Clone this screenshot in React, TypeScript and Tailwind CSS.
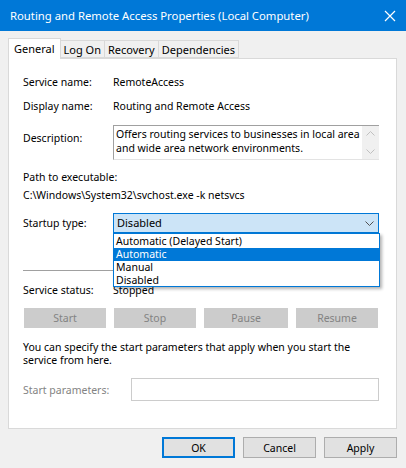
import React from 'react';

const FONT = "font-['Segoe_UI','Noto_Sans',sans-serif]";

function Tab({ label, active }: { label: string; active?: boolean }) {
  return active ? (
    <div className="h-[21px] -mb-px px-[5px] pt-[2px] bg-white border border-b-0 border-[#d9d9d9] relative z-10 text-[11px]">
      {label}
    </div>
  ) : (
    <div className="h-[18px] mt-[2px] px-[3px] pt-px bg-[#f0f0f0] border border-l-0 border-[#d9d9d9] text-[11px]">
      {label}
    </div>
  );
}

function Row({ label, value }: { label: string; value: string }) {
  return (
    <div className="flex h-4 items-center">
      <div className="w-[90px]">{label}</div>
      <div>{value}</div>
    </div>
  );
}

function DisabledButton({ label, w }: { label: string; w: string }) {
  return (
    <div className={`${w} h-5 bg-[#cccccc] border border-[#cccccc] flex items-center justify-center text-[#838383]`}>
      {label}
    </div>
  );
}

function Chevron({ className }: { className?: string }) {
  return (
    <svg width="9" height="5" viewBox="0 0 9 5" className={className}>
      <path d="M0.5 0.5 L4.5 4.5 L8.5 0.5" fill="none" stroke="currentColor" strokeWidth="1" />
    </svg>
  );
}

export default function App() {
  const options = ['Automatic (Delayed Start)', 'Automatic', 'Manual', 'Disabled'];

  return (
    <div className={`w-[406px] h-[468px] bg-[#f0f0f0] text-[10.5px] leading-4 text-black flex flex-col ${FONT}`}>
      <div className="h-[31px] bg-[#0078d7] text-white flex items-center justify-between pl-[10px] pr-[10px]">
        <span className="text-[11.3px]">Routing and Remote Access Properties (Local Computer)</span>
        <svg width="12" height="12" viewBox="0 0 12 12">
          <path d="M1 1 L11 11 M11 1 L1 11" stroke="white" strokeWidth="1.2" />
        </svg>
      </div>

      <div className="flex items-start pl-[8px] mt-[7px] h-[20px]">
        <Tab label="General" active />
        <Tab label="Log On" />
        <Tab label="Recovery" />
        <Tab label="Dependencies" />
      </div>

      <div className="ml-[8px] mr-[9px] h-[371px] bg-white border border-[#d9d9d9] pl-[14px] pr-[17px] pt-[15px] flex flex-col">
        <Row label="Service name:" value="RemoteAccess" />
        <div className="mt-2">
          <Row label="Display name:" value="Routing and Remote Access" />
        </div>

        <div className="flex mt-[11px]">
          <div className="w-[90px] pt-[5px]">Description:</div>
          <div className="flex-1 h-[35px] border border-[#a0a0a0] border-r-0 border-b-[#e3e3e3] flex">
            <div className="flex-1 pl-[2px] pt-px leading-[14px]">
              Offers routing services to businesses in local area and wide area network environments.
            </div>
            <div className="w-[17px] bg-[#f0f0f0] flex flex-col items-center justify-between py-[5px] text-[#c0c0c0]">
              <Chevron className="rotate-180" />
              <Chevron />
            </div>
          </div>
        </div>

        <div className="mt-[9px]">Path to executable:</div>
        <div className="mt-[2px]">C:\Windows\System32\svchost.exe -k netsvcs</div>

        <div className="flex items-center mt-[10px] relative">
          <div className="w-[90px]">Startup type:</div>
          <div className="flex-1 h-5 bg-[#cce4f7] border border-[#0078d7] flex items-center justify-between pl-[3px] pr-[4px]">
            <span className="text-[11px]">Disabled</span>
            <Chevron className="text-[#505050]" />
          </div>
          <div className="absolute left-[90px] right-[-1px] top-5 h-[54px] bg-white border border-[#0078d7] pt-[1px] z-20 shadow-[2px_2px_3px_rgba(0,0,0,0.3)]">
            {options.map(o => (
              <div
                key={o}
                className={`h-[13px] leading-[13px] pl-[2px] ${o === 'Automatic' ? 'bg-[#0078d7] text-white' : ''}`}
              >
                {o}
              </div>
            ))}
          </div>
        </div>

        <div className="mt-[37px] h-px bg-[#a0a0a0]" />

        <div className="mt-[11px]">
          <Row label="Service status:" value="Stopped" />
        </div>

        <div className="flex mt-[10px] gap-[8px] pl-px">
          <DisabledButton label="Start" w="w-[82px]" />
          <DisabledButton label="Stop" w="w-[82px]" />
          <DisabledButton label="Pause" w="w-[84px]" />
          <DisabledButton label="Resume" w="w-[82px]" />
        </div>

        <div className="mt-[13px] leading-[13px]">
          You can specify the start parameters that apply when you start the service from here.
        </div>

        <div className="flex items-center mt-[11px]">
          <div className="w-[108px] text-[#838383]">Start parameters:</div>
          <div className="flex-1 h-[23px] border border-[#cccccc] bg-white" />
        </div>
      </div>

      <div className="flex justify-end gap-[8px] mt-[8px] pr-[9px]">
        <div className="w-[73px] h-[21px] bg-[#e1e1e1] border-2 border-[#0078d7] flex items-center justify-center">OK</div>
        <div className="w-[73px] h-[21px] bg-[#e1e1e1] border border-[#adadad] flex items-center justify-center">Cancel</div>
        <div className="w-[73px] h-[21px] bg-[#e1e1e1] border border-[#adadad] flex items-center justify-center">Apply</div>
      </div>
    </div>
  );
}
